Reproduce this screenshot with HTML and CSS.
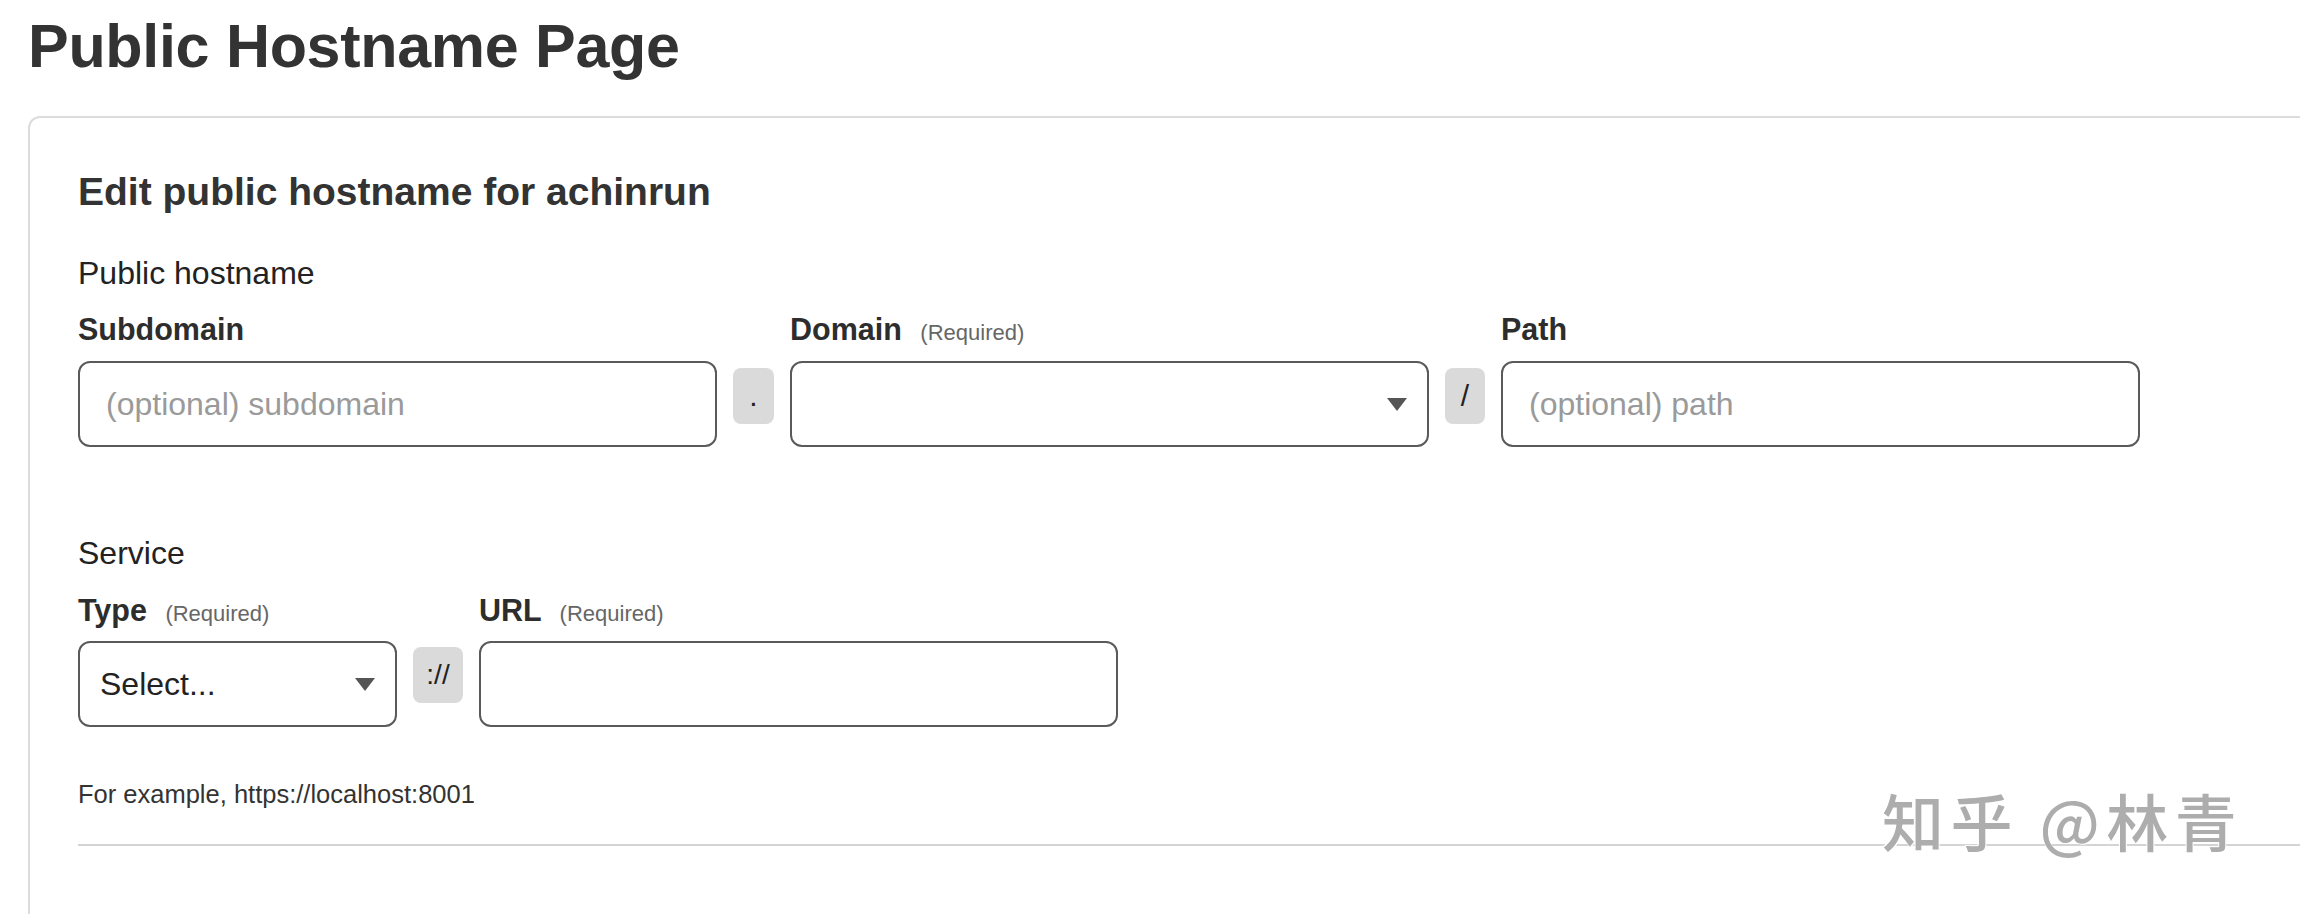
FILE: index.html
```html
<!DOCTYPE html>
<html>
<head>
  <title>Public Hostname Page</title>
  <link rel="stylesheet" href="styles.css">
</head>
<body>
  <div class="page">
    <h1 class="page-title">Public Hostname Page</h1>

    <div class="card">
      <h2 class="card-title">Edit public hostname for achinrun</h2>

      <!-- Public hostname -->
      <p class="section-label">Public hostname</p>
      <div class="host-grid">
        <label class="field-label" for="subdomain">Subdomain</label>
        <span></span>
        <label class="field-label" for="domain">Domain <span class="req">(Required)</span></label>
        <span></span>
        <label class="field-label" for="path">Path</label>

        <input class="text-input" id="subdomain" type="text" placeholder="(optional) subdomain">
        <span class="addon">.</span>
        <div class="select-box" id="domain">
          <span class="select-value"></span>
          <span class="caret"></span>
        </div>
        <span class="addon">/</span>
        <input class="text-input" id="path" type="text" placeholder="(optional) path">
      </div>

      <!-- Service -->
      <p class="section-label service">Service</p>
      <div class="service-grid">
        <label class="field-label" for="type">Type <span class="req">(Required)</span></label>
        <span></span>
        <label class="field-label" for="url">URL <span class="req">(Required)</span></label>

        <div class="select-box" id="type">
          <span class="select-value">Select...</span>
          <span class="caret"></span>
        </div>
        <span class="addon addon-wide">://</span>
        <input class="text-input" id="url" type="text">
      </div>

      <p class="hint">For example, https://localhost:8001</p>
      <hr class="divider">
    </div>
  </div>

  <div class="watermark">知乎 @林青</div>
</body>
</html>
```

FILE: styles.css
```css
/* Basic reset */
* {
  box-sizing: border-box;
  margin: 0;
  padding: 0;
}

body {
  font-family: "Liberation Sans", Arial, sans-serif;
  background-color: #ffffff;
  color: #333333;
  overflow: hidden;
  height: 100vh;
}

.page {
  padding: 10px 0 0 28px;
}

/* Page heading */
.page-title {
  font-size: 61px;
  line-height: 72px;
  font-weight: 700;
  color: #333333;
  letter-spacing: -0.3px;
  margin-bottom: 34px;
}

/* Card */
.card {
  width: 2400px;
  min-height: 900px;
  border: 2px solid #dcdcdc;
  border-radius: 12px;
  padding: 50px 48px 0 48px;
  background-color: #ffffff;
}

.card-title {
  font-size: 39px;
  line-height: 48px;
  font-weight: 700;
  color: #333333;
  margin-bottom: 37px;
}

.section-label {
  font-size: 32px;
  line-height: 40px;
  color: #222222;
  margin-bottom: 17px;
}

.section-label.service {
  margin-top: 86px;
  margin-bottom: 18px;
}

/* Field rows */
.host-grid,
.service-grid {
  display: grid;
  column-gap: 16px;
  row-gap: 9px;
  align-items: start;
}

.host-grid {
  grid-template-columns: 639px 41px 639px 40px 639px;
}

.service-grid {
  grid-template-columns: 319px 50px 639px;
  row-gap: 8px;
}

.field-label {
  display: block;
  font-size: 30.5px;
  line-height: 38px;
  font-weight: 700;
  color: #2d2d2d;
  white-space: nowrap;
}

.req {
  font-size: 22px;
  font-weight: 400;
  color: #666666;
  margin-left: 10px;
}

/* Inputs and selects */
.text-input,
.select-box {
  width: 100%;
  height: 86px;
  border: 2px solid #5a5a5a;
  border-radius: 12px;
  background-color: #ffffff;
  font-family: inherit;
  font-size: 32px;
  color: #222222;
}

.text-input {
  padding: 0 26px;
  outline: none;
}

.text-input::placeholder {
  color: #9a9a9a;
}

.select-box {
  display: flex;
  align-items: center;
  justify-content: space-between;
  padding: 0 20px 0 20px;
}

.select-value {
  color: #222222;
}

.caret {
  width: 0;
  height: 0;
  border-left: 10px solid transparent;
  border-right: 10px solid transparent;
  border-top: 13px solid #555555;
}

/* Separators between fields */
.addon {
  height: 56px;
  margin-top: 7px;
  background-color: #dadada;
  border-radius: 8px;
  display: flex;
  align-items: center;
  justify-content: center;
  font-size: 30px;
  color: #222222;
}

.addon-wide {
  margin-top: 6px;
  font-size: 28px;
}

/* Footer of the form */
.hint {
  font-size: 25.5px;
  line-height: 32px;
  color: #333333;
  margin-top: 51px;
}

.divider {
  border: none;
  border-top: 2px solid #d4d4d4;
  margin-top: 34px;
}

/* Watermark over the page */
.watermark {
  position: absolute;
  left: 1882px;
  top: 776px;
  font-family: "Noto Sans CJK SC", sans-serif;
  font-size: 62px;
  font-weight: 500;
  line-height: 88px;
  color: #adadad;
  letter-spacing: 6.5px;
  text-shadow: 1px 1px 0 #ffffff, -1px -1px 0 #ffffff;
}
```
